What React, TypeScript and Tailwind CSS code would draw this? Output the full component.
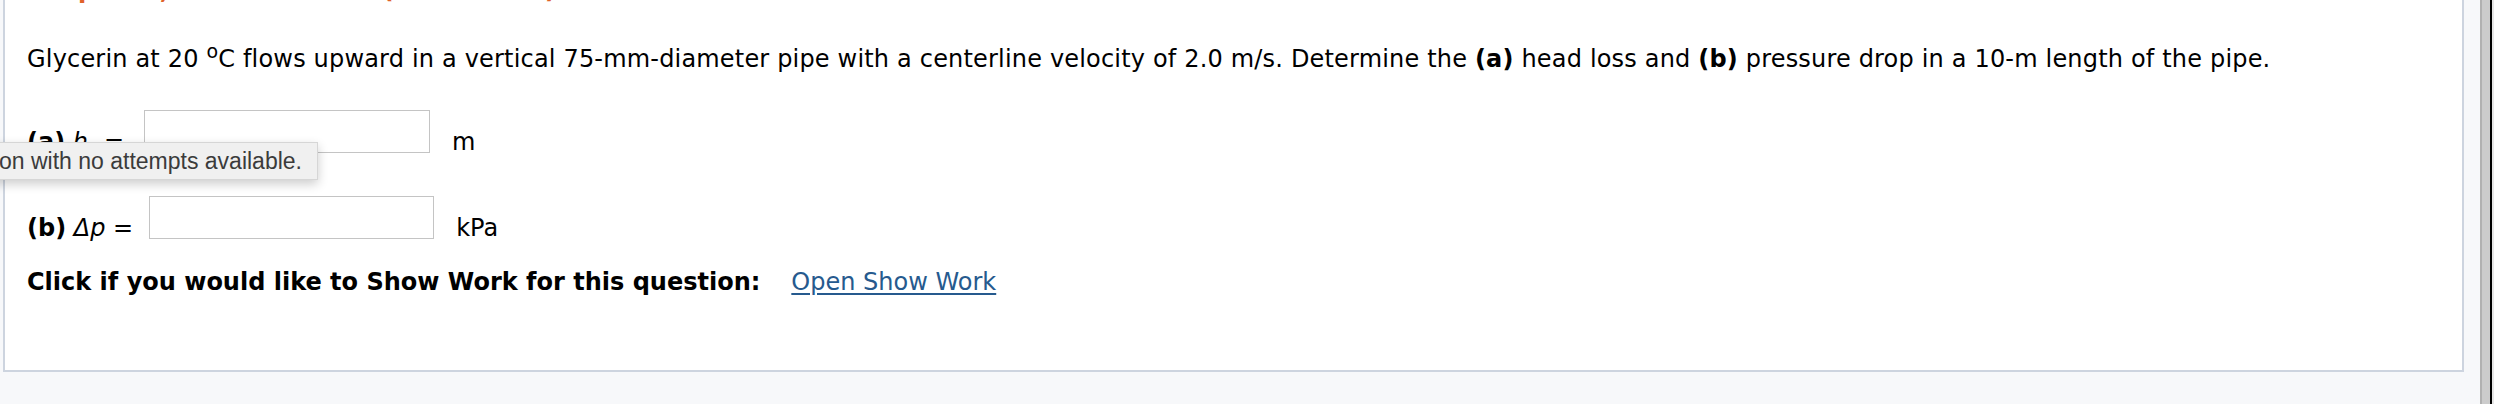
import React from "react";

const bodyFont = { fontFamily: '"DejaVu Sans", Verdana, sans-serif' };

export default function App() {
  return (
    <div
      className="flex h-[404px] w-[2494px] overflow-hidden bg-[#f7f8fa] text-[24px] text-black"
      style={bodyFont}
    >
      <div className="relative flex-1 pl-[3px] pr-[16px]">
        <div className="border-x-2 border-b-2 border-[#cdd4df] bg-white pb-[73px] pl-[22px]">
          <h2 className="-mt-[24px] text-[24px] font-bold leading-[29px] text-[#e0622a]">
            Chapter 8, Problem 8.051 (GO Tutorial)
          </h2>

          <p className="mt-[39px] leading-[30px] tracking-[0.18px]">
            Glycerin at 20 <sup className="text-[19px]">o</sup>C flows upward in a vertical
            75-mm-diameter pipe with a centerline velocity of 2.0 m/s. Determine the{" "}
            <b>(a)</b> head loss and <b>(b)</b> pressure drop in a 10-m length of the pipe.
          </p>

          <div className="mt-[36px] flex items-start">
            <span className="mt-[17px] leading-[30px]">
              <b>(a)</b> <i>h</i>
              <sub className="text-[15px] italic">L</sub> =
            </span>
            <input
              type="text"
              className="ml-[20px] h-[43px] w-[286px] border border-[#c4c4c4] bg-white outline-none"
            />
            <span className="ml-[22px] mt-[17px] leading-[30px]">m</span>
          </div>

          <div className="mt-[39px] flex items-start">
            <span className="mt-[17px] leading-[30px]">
              <b>(b)</b> <i>Δp</i> =
            </span>
            <input
              type="text"
              className="ml-[16px] h-[43px] w-[285px] border border-[#c4c4c4] bg-white outline-none"
            />
            <span className="ml-[22px] mt-[17px] leading-[30px]">kPa</span>
          </div>

          <div className="mt-[24px] flex leading-[30px]">
            <b>Click if you would like to Show Work for this question:</b>
            <a href="#" className="ml-[31px] text-[#265a8e] underline underline-offset-[3px]">
              Open Show Work
            </a>
          </div>
        </div>

        <div className="absolute left-0 top-[142px] flex w-[318px] justify-end">
          <div
            className="h-[38px] shrink-0 whitespace-nowrap border border-[#d6d6d6] bg-[#f0f0f0] px-[15px] text-[23px] leading-[36px] text-[#3b3b3b] shadow-[0_4px_10px_rgba(0,0,0,0.2)]"
            style={{ fontFamily: '"Liberation Sans", Arial, sans-serif' }}
          >
            You cannot submit a question with no attempts available.
          </div>
        </div>
      </div>

      <div className="flex w-[14px]">
        <div className="w-[2px] bg-[#b1b1b1]" />
        <div className="w-[8px] bg-[#cccccc]" />
        <div className="w-[2px] bg-black" />
        <div className="w-[2px] bg-[#e6e6e6]" />
      </div>
    </div>
  );
}
